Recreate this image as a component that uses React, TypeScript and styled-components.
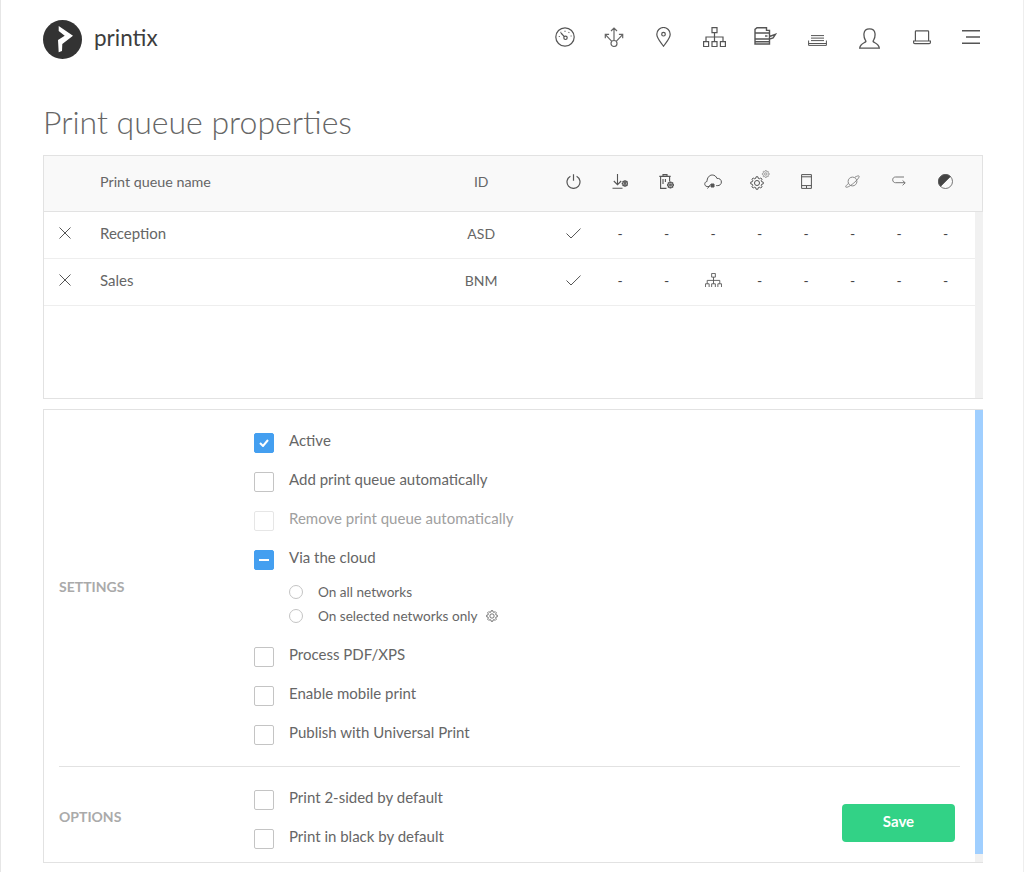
import React from 'react';
import styled, {createGlobalStyle} from 'styled-components';

const GlobalStyle = createGlobalStyle`
  html, body {
    margin: 0;
    padding: 0;
    background: #ffffff;
  }
  body {
    font-family: Lato, "Open Sans", sans-serif;
    color: #666666;
  }
`;

const Page = styled.div`
  box-sizing: border-box;
  width: 1024px;
  height: 872px;
  overflow: hidden;
  padding: 0 40px 0 42px;
  border-left: 1px solid #e6e6e6;
  border-right: 1px solid #eeeeee;
`;

const Header = styled.header`
  display: flex;
  align-items: center;
  justify-content: space-between;
  height: 78px;
  padding-right: 3px;
`;

const Logo = styled.div`
  display: flex;
  align-items: center;
  gap: 12px;
`;

const LogoText = styled.span`
  font-size: 22.5px;
  line-height: 30px;
  color: #3d3d3d;
  margin-top: -3px;
`;

const Nav = styled.nav`
  display: flex;
  align-items: center;
  margin-top: -4px;
`;

const NavItem = styled.div<{$gap?: number; $drop?: number}>`
  margin-left: ${(p) => p.$gap ?? 0}px;
  margin-top: ${(p) => p.$drop ?? 0}px;
`;

const Glyph = styled.svg<{$color?: string; $weight?: number}>`
  display: block;
  fill: none;
  stroke: ${(p) => p.$color ?? '#555555'};
  stroke-width: ${(p) => p.$weight ?? 1.2};
  flex: none;
`;

const RaisedGlyph = styled(Glyph)`
  margin-bottom: 4px;
`;

const Title = styled.h1`
  margin: 0;
  height: 77px;
  padding-top: 24px;
  box-sizing: border-box;
  font-size: 32px;
  line-height: 40px;
  font-weight: 300;
  color: #666666;
`;

const Table = styled.section`
  border: 1px solid #e2e2e2;
  border-right: none;
  height: 244px;
  box-sizing: border-box;
  display: flex;
  flex-direction: column;
`;

const Row = styled.div<{$head?: boolean}>`
  display: grid;
  grid-template-columns: 56px 312px 138.4px repeat(9, 46.5px);
  align-items: center;
  height: ${(p) => (p.$head ? '56px' : '47px')};
  box-sizing: border-box;
  padding-bottom: 4px;
  font-size: ${(p) => (p.$head ? '14.3px' : '15px')};
  color: #666666;
  background: ${(p) => (p.$head ? '#f9f9f9' : 'transparent')};
  border-bottom: 1px solid ${(p) => (p.$head ? '#e2e2e2' : '#eeeeee')};
  ${(p) => (p.$head ? 'border-right: 1px solid #e2e2e2;' : '')}
`;

const Cell = styled.div`
  display: flex;
  justify-content: center;
  align-items: center;
  font-size: 14px;
`;

const EmptyCell = styled(Cell)`
  color: #444444;
`;

const RemoveCell = styled(Cell)`
  justify-content: flex-start;
  padding-left: 15px;
`;

const TableBody = styled.div`
  flex: 1;
  display: flex;
  min-height: 0;
`;

const Rows = styled.div`
  flex: 1;
`;

const Track = styled.div`
  width: 8px;
  flex: none;
  background: #f1f1f1;
`;

const Thumb = styled.div`
  height: 444px;
  background: #a0cfff;
`;

const Panel = styled.section`
  margin-top: 10px;
  height: 454px;
  box-sizing: border-box;
  border: 1px solid #e2e2e2;
  border-right: none;
  display: flex;
`;

const PanelBody = styled.div`
  flex: 1;
  padding: 23px 15px 0;
`;

const Section = styled.div`
  display: flex;
  align-items: center;
`;

const SectionLabel = styled.div`
  width: 195px;
  flex: none;
  font-size: 14px;
  font-weight: 700;
  color: #aaaaaa;
  padding-bottom: 6px;
`;

const Options = styled.div`
  display: flex;
  flex-direction: column;
  gap: 19px;
`;

const Option = styled.div<{$disabled?: boolean}>`
  display: flex;
  align-items: center;
  gap: 15px;
  height: 20px;
  font-size: 15px;
  color: ${(p) => (p.$disabled ? '#a0a0a0' : '#666666')};
  span {
    margin-top: -6px;
  }
`;

const Box = styled.div<{$on?: boolean; $disabled?: boolean}>`
  width: 20px;
  height: 20px;
  box-sizing: border-box;
  border-radius: 2px;
  background: ${(p) => (p.$on ? '#449ff0' : '#ffffff')};
  border: 1px solid ${(p) => (p.$on ? '#449ff0' : p.$disabled ? '#e6e6e6' : '#c4c4c4')};
  display: flex;
  align-items: center;
  justify-content: center;
`;

const RadioGroup = styled.div`
  margin: -9px 0 0 35px;
  display: flex;
  flex-direction: column;
`;

const RadioRow = styled.div`
  display: flex;
  align-items: center;
  height: 24px;
  font-size: 13.6px;
  color: #666666;
  span {
    margin-left: 15px;
    margin-top: -1px;
  }
  svg {
    margin-left: 9px;
  }
`;

const Radio = styled.div`
  width: 14px;
  height: 14px;
  box-sizing: border-box;
  border: 1px solid #c4c4c4;
  border-radius: 50%;
`;

const Divider = styled.hr`
  margin: 21px 0 23px;
  border: none;
  border-top: 1px solid #e2e2e2;
`;

const SaveButton = styled.button`
  margin: 6px 5px 0 auto;
  width: 113px;
  height: 38px;
  border: none;
  border-radius: 4px;
  background: #32d286;
  color: #ffffff;
  font-family: Lato, sans-serif;
  font-size: 15px;
  font-weight: 700;
  padding-bottom: 5px;
`;

// outline of a toothed wheel, used by the small settings icons
const gearPath = (cx: number, cy: number, r: number, teeth = 8) => {
  const pts: string[] = [];
  const step = (Math.PI * 2) / teeth;
  for (let i = 0; i < teeth; i++) {
    const a = i * step;
    [
      [a - step * 0.36, r * 0.76],
      [a - step * 0.18, r],
      [a + step * 0.18, r],
      [a + step * 0.36, r * 0.76],
    ].forEach(([t, d]) => {
      pts.push(`${(cx + Math.cos(t) * d).toFixed(2)} ${(cy + Math.sin(t) * d).toFixed(2)}`);
    });
  }
  return `M${pts.join('L')}Z`;
};

const Gear = ({x, y, r, hole = 0.4}: {x: number; y: number; r: number; hole?: number}) => (
  <g>
    <path d={gearPath(x, y, r)} />
    <circle cx={x} cy={y} r={r * hole} />
  </g>
);

const GaugeIcon = () => (
  <Glyph width="20" height="20" viewBox="0 0 20 20">
    <circle cx="10" cy="10" r="9.2" />
    <circle cx="10.500" cy="10.800" r="1.700" />
    <path d="M9.300 9.600 6 6M3.800 9.500h1M15.600 9h1M10 3.800v1M5.500 5l.5.500M14.200 5.200l-.6.600" />
  </Glyph>
);

const ArrowsIcon = () => (
  <Glyph width="20" height="20" viewBox="0 0 20 20" $color="#666666">
    <circle cx="10" cy="16.500" r="3" />
    <path d="M10 13.500V1.200M7 4l3-3 3 3M7.800 14.400 1.400 7.600M1.300 11.200V7.400h3.800M12.200 14.400l6.400-6.800M18.700 11.200V7.400h-3.800" />
  </Glyph>
);

const PinIcon = () => (
  <Glyph width="15" height="20" viewBox="0 0 15 20">
    <path d="M7.500 19.200C5.800 16.400.8 11.600.8 7.200a6.700 6.700 0 0 1 13.400 0c0 4.400-5 9.200-6.700 12Z" />
    <circle cx="7.500" cy="7.200" r="1.800" />
  </Glyph>
);

const NetworkIcon = ({size = 23}: {size?: number}) => (
  <Glyph width={size} height={size * 0.87} viewBox="0 0 23 20">
    <path d="M9 .6h5v5H9zM.6 14.600h5v5h-5zM9 14.600h5v5H9zM17.400 14.600h5v5h-5zM11.500 5.600v9M3 14.600V10h17v4.600" />
  </Glyph>
);

const PrinterIcon = () => (
  <Glyph width="23" height="18" viewBox="0 0 23 18" $weight={1.4}>
    <path d="M1 6V2.400L3 .8h9.500v2.600H15.500V17H1ZM1 6h14.500M1 12h14.500M1 14.800h14.500M15.500 9.500l6-2.200-2.400 3.600-3.600 1.200" />
    <path d="M11 9h2.500" />
  </Glyph>
);

const TrayIcon = () => (
  <Glyph width="19" height="11" viewBox="0 0 19 11" $weight={1}>
    <path d="M3 .6h13M3 3.100h13M3 5.600h13M.6 5.500v4.900h17.800V5.500" />
    <path d="M.6 8.500h17.800" />
  </Glyph>
);

const UserIcon = () => (
  <Glyph width="21" height="21" viewBox="0 0 21 21" $weight={1.3}>
    <path d="M6.200 11.800C5 9.800 4.800 7.500 5 5.500 5.300 2.400 7.600.8 10.500.8s5.200 1.600 5.500 4.700c.2 2-.1 4.300-1.200 6.300-.5 1-1.100 1.300-.5 2 1.200 1.300 5.400 1.600 6 6.400H.7c.6-4.800 4.800-5.100 6-6.400.6-.7 0-1-.5-2Z" />
  </Glyph>
);

const LaptopIcon = () => (
  <Glyph width="18" height="15" viewBox="0 0 18 15">
    <path d="M2.400 11V1.600c0-.5.3-.8.8-.8h11.600c.5 0 .8.3.8.8V11M.6 11h16.800v1.400c0 .8-.5 1.200-1.200 1.200H1.800c-.7 0-1.200-.4-1.200-1.200Z" />
  </Glyph>
);

const MenuIcon = () => (
  <Glyph width="18" height="14" viewBox="0 0 18 14" $weight={1.4}>
    <path d="M0 .8h18M4 7h14M0 13.200h18" />
  </Glyph>
);

const PowerIcon = () => (
  <Glyph width="15" height="15" viewBox="0 0 15 15">
    <path d="M4.400 2.200a6.500 6.500 0 1 0 6.200 0M7.500.2v6.600" />
  </Glyph>
);

const QueueInIcon = () => (
  <Glyph width="16" height="15" viewBox="0 0 16 15" $weight={1.1}>
    <path d="M5.500 0v10.500M1.800 7l3.700 3.700L9.200 7M.5 14.200h10" />
    <Gear x={13} y={9.500} r={2.800} hole={0.3} />
  </Glyph>
);

const BinIcon = () => (
  <Glyph width="15" height="15" viewBox="0 0 15 15" $weight={1.1}>
    <path d="M.3 2.400h11.400M4 2.200V.6h4v1.600M1.600 2.400v12H7.500M10.600 2.400v5M4 5v5M6.400 5v3" />
    <Gear x={11.500} y={11} r={3} hole={0.3} />
  </Glyph>
);

const CloudIcon = () => (
  <Glyph width="18" height="15" viewBox="0 0 18 15" $weight={1}>
    <path d="M5.500 12.500H3.200C1.400 12.500.6 11 .8 9.600c.2-1.300 1.200-2 2.200-2.100C3 4 5.200 1 8.200 1c2.400 0 4 1.400 4.700 3.400 2.400-.3 4.500 1.200 4.500 3.600 0 2.400-1.900 3.600-3.600 3.600h-1.600" />
    <path d="M3.500 14.500 6.500 10.500" />
    <path d="M7 10h3v3H7z" fill="#555555" />
  </Glyph>
);

const GearsIcon = () => (
  <RaisedGlyph width="20" height="20" viewBox="0 0 20 20" $weight={1}>
    <Gear x={7} y={13} r={6.300} />
    <g stroke="#999999">
      <Gear x={15.800} y={4} r={3.500} hole={0.35} />
    </g>
  </RaisedGlyph>
);

const TabletIcon = () => (
  <Glyph width="11" height="15" viewBox="0 0 11 15" $weight={1}>
    <path d="M.6.6h9.800v13.800H.6zM.6 2.800h9.800M.6 11.600h9.800M5.500 12v2" />
  </Glyph>
);

const PlanetIcon = () => (
  <Glyph width="15" height="13" viewBox="0 0 15 13" $color="#888888" $weight={1}>
    <circle cx="7.500" cy="6.500" r="4.400" />
    <path d="M3.600 8.200C1.600 10 .2 11.600.8 12.100c.9.800 4.400-1 7.800-3.900S14.700 2 14.100 1.100C13.600.5 12 1 10 2.200" />
  </Glyph>
);

const RouteIcon = () => (
  <Glyph width="14" height="12" viewBox="0 0 14 12" $color="#777777" $weight={1}>
    <path d="M12 1H3.500C1.800 1 .7 2.200.7 3.800s1.100 2.900 2.800 2.900h9.600M10.600 4.500l2.600 2.300-2.600 2.500" />
  </Glyph>
);

const ContrastIcon = () => (
  <Glyph width="15" height="15" viewBox="0 0 15 15" $weight={0.8}>
    <circle cx="7.500" cy="7.500" r="7" />
    <path d="M12.450 2.550A7 7 0 0 0 2.550 12.450Z" fill="#444444" />
  </Glyph>
);

const CheckMark = () => (
  <Glyph width="15" height="11" viewBox="0 0 15 11" $weight={1}>
    <path d="M.5 5.500 5 10 14.500.6" />
  </Glyph>
);

const CrossMark = () => (
  <Glyph width="12" height="12" viewBox="0 0 12 12" $weight={1}>
    <path d="M.5.500l11 11M11.500.500l-11 11" />
  </Glyph>
);

const SmallGear = () => (
  <Glyph width="12" height="12" viewBox="0 0 12 12" $weight={0.8}>
    <Gear x={6} y={6} r={5.400} />
  </Glyph>
);

const BoxTick = () => (
  <svg width="10" height="8" viewBox="0 0 10 8" fill="none" stroke="#ffffff" strokeWidth="2">
    <path d="M1 4l3 3 5-6" />
  </svg>
);

const BoxDash = () => (
  <svg width="10" height="2" viewBox="0 0 10 2">
    <rect width="10" height="2" fill="#ffffff" />
  </svg>
);

const headIcons = [
  <PowerIcon />,
  <QueueInIcon />,
  <BinIcon />,
  <CloudIcon />,
  <GearsIcon />,
  <TabletIcon />,
  <PlanetIcon />,
  <RouteIcon />,
  <ContrastIcon />,
];

const queues = [
  {name: 'Reception', id: 'ASD', cloud: false},
  {name: 'Sales', id: 'BNM', cloud: true},
];

function Check({label, on, dash, disabled}: {label: string; on?: boolean; dash?: boolean; disabled?: boolean}) {
  return (
    <Option $disabled={disabled}>
      <Box $on={on || dash} $disabled={disabled}>
        {on && <BoxTick />}
        {dash && <BoxDash />}
      </Box>
      <span>{label}</span>
    </Option>
  );
}

export default function App() {
  return (
    <>
      <GlobalStyle />
      <Page>
        <Header>
          <Logo>
            <svg width="39" height="39" viewBox="0 0 39 39">
              <circle cx="19.500" cy="19.500" r="19.500" fill="#333333" />
              <path d="M15.700 6 30 15.700 19.300 24 19 31l-3.300 1.300L15 20l6.700-4.300L15.700 11Z" fill="#ffffff" />
            </svg>
            <LogoText>printix</LogoText>
          </Logo>
          <Nav>
            <NavItem>
              <GaugeIcon />
            </NavItem>
            <NavItem $gap={29}>
              <ArrowsIcon />
            </NavItem>
            <NavItem $gap={32}>
              <PinIcon />
            </NavItem>
            <NavItem $gap={32}>
              <NetworkIcon />
            </NavItem>
            <NavItem $gap={28} $drop={-2}>
              <PrinterIcon />
            </NavItem>
            <NavItem $gap={31} $drop={6}>
              <TrayIcon />
            </NavItem>
            <NavItem $gap={32} $drop={2}>
              <UserIcon />
            </NavItem>
            <NavItem $gap={33}>
              <LaptopIcon />
            </NavItem>
            <NavItem $gap={31}>
              <MenuIcon />
            </NavItem>
          </Nav>
        </Header>
        <Title>Print queue properties</Title>
        <Table>
          <Row $head>
            <div />
            <div>Print queue name</div>
            <Cell>ID</Cell>
            {headIcons.map((icon, i) => (
              <Cell key={i}>{icon}</Cell>
            ))}
          </Row>
          <TableBody>
            <Rows>
              {queues.map((q) => (
                <Row key={q.id}>
                  <RemoveCell>
                    <CrossMark />
                  </RemoveCell>
                  <div>{q.name}</div>
                  <Cell>{q.id}</Cell>
                  <Cell>
                    <CheckMark />
                  </Cell>
                  <EmptyCell>-</EmptyCell>
                  <EmptyCell>-</EmptyCell>
                  <EmptyCell>{q.cloud ? <NetworkIcon size={17} /> : '-'}</EmptyCell>
                  <EmptyCell>-</EmptyCell>
                  <EmptyCell>-</EmptyCell>
                  <EmptyCell>-</EmptyCell>
                  <EmptyCell>-</EmptyCell>
                  <EmptyCell>-</EmptyCell>
                </Row>
              ))}
            </Rows>
            <Track />
          </TableBody>
        </Table>
        <Panel>
          <PanelBody>
            <Section>
              <SectionLabel>SETTINGS</SectionLabel>
              <Options>
                <Check label="Active" on />
                <Check label="Add print queue automatically" />
                <Check label="Remove print queue automatically" disabled />
                <Check label="Via the cloud" dash />
                <RadioGroup>
                  <RadioRow>
                    <Radio />
                    <span>On all networks</span>
                  </RadioRow>
                  <RadioRow>
                    <Radio />
                    <span>On selected networks only</span>
                    <SmallGear />
                  </RadioRow>
                </RadioGroup>
                <Check label="Process PDF/XPS" />
                <Check label="Enable mobile print" />
                <Check label="Publish with Universal Print" />
              </Options>
            </Section>
            <Divider />
            <Section>
              <SectionLabel>OPTIONS</SectionLabel>
              <Options>
                <Check label="Print 2-sided by default" />
                <Check label="Print in black by default" />
              </Options>
              <SaveButton>Save</SaveButton>
            </Section>
          </PanelBody>
          <Track>
            <Thumb />
          </Track>
        </Panel>
      </Page>
    </>
  );
}
